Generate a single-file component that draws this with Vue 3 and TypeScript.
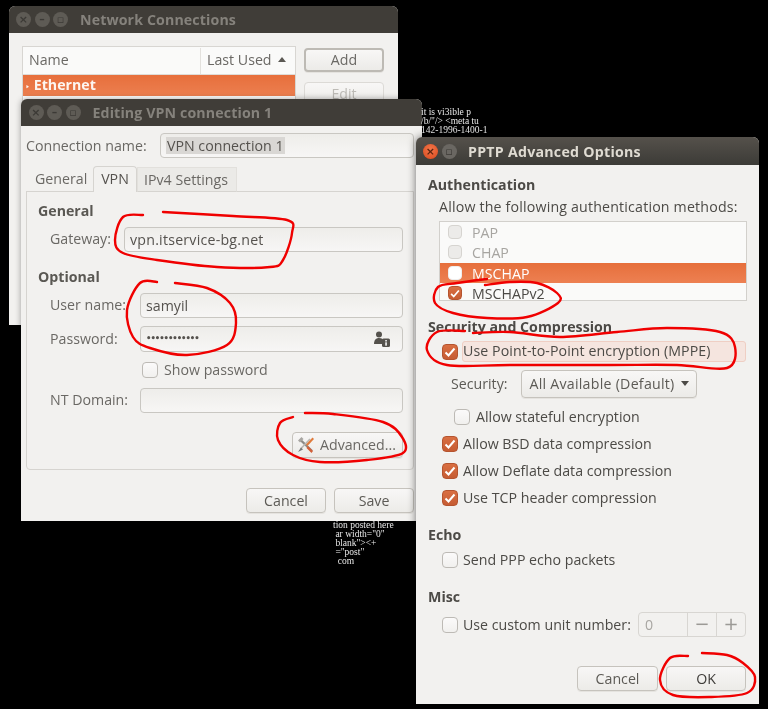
<script setup lang="ts">
type Pt = [number, number];

const scribbles: Pt[][] = [
  [[143,215],[123,217],[115,240],[123,253],[157,260],[217,267],[270,267],[283,260],[292,233],[287,220],[233,216],[163,212]],
  [[157,282],[140,283],[127,310],[133,337],[150,348],[187,355],[227,345],[236,323],[230,303],[207,288],[175,283]],
  [[293,417],[280,423],[278,440],[293,455],[320,462],[367,460],[403,453],[402,437],[383,422],[333,414],[305,413]],
  [[487,279],[457,283],[438,287],[435,303],[453,313],[487,318],[527,317],[558,303],[557,293],[537,283],[510,282],[485,285]],
  [[465,331],[437,332],[427,350],[447,365],[510,365],[610,365],[677,365],[727,368],[735,347],[720,332],[667,328],[617,332],[560,337],[510,332],[473,333]],
  [[688,656],[670,658],[660,680],[673,695],[710,697],[747,693],[755,677],[743,663],[727,655],[702,653]],
];

function smooth(p: Pt[]): string {
  let d = `M${p[0][0]} ${p[0][1]}`;
  for (let i = 0; i < p.length - 1; i++) {
    const a = p[Math.max(i - 1, 0)];
    const b = p[i];
    const c = p[i + 1];
    const e = p[Math.min(i + 2, p.length - 1)];
    const c1x = b[0] + (c[0] - a[0]) / 6;
    const c1y = b[1] + (c[1] - a[1]) / 6;
    const c2x = c[0] - (e[0] - b[0]) / 6;
    const c2y = c[1] - (e[1] - b[1]) / 6;
    d += ` C${c1x} ${c1y} ${c2x} ${c2y} ${c[0]} ${c[1]}`;
  }
  return d;
}

const paths = scribbles.map(smooth);
const methods = [
  { name: 'PAP', cls: 'off', checked: false },
  { name: 'CHAP', cls: 'off', checked: false },
  { name: 'MSCHAP', cls: 'sel', checked: false },
  { name: 'MSCHAPv2', cls: '', checked: true },
];
const compression = ['Allow BSD data compression', 'Allow Deflate data compression', 'Use TCP header compression'];
</script>

<template>
  <div class="stage">
    <!-- Network Connections -->
    <section class="win nc">
      <header class="title dim">
        <span class="wb"><i class="dot">×</i><i class="dot">–</i><i class="dot">▫</i></span>
        <span class="ttext">Network Connections</span>
      </header>
      <div class="nc-body">
        <div class="nc-list">
          <div class="nc-head">
            <span class="nc-name">Name</span>
            <span class="nc-used">Last Used <b class="tri"></b></span>
          </div>
          <div class="nc-row"><span class="mini">‣</span> Ethernet</div>
        </div>
        <div class="nc-btns">
          <button class="btn add">Add</button>
          <button class="btn ghost">Edit</button>
        </div>
      </div>
    </section>

    <!-- Editing VPN -->
    <section class="win ed">
      <header class="title dim">
        <span class="wb"><i class="dot">×</i><i class="dot">–</i><i class="dot">▫</i></span>
        <span class="ttext">Editing VPN connection 1</span>
      </header>
      <div class="ed-body">
        <div class="name-row">
          <label class="name-label">Connection name:</label>
          <div class="entry grow"><span class="hl">VPN connection 1</span></div>
        </div>
        <div class="tabs">
          <span class="tab t1">General</span>
          <span class="tab active">VPN</span>
          <span class="tab t3">IPv4 Settings</span>
        </div>
        <div class="pane">
          <div class="h bold">General</div>
          <div class="frow gw">
            <label class="gw-l">Gateway:</label>
            <div class="entry grow host">vpn.itservice-bg.net</div>
          </div>
          <div class="h bold opt">Optional</div>
          <div class="frow gw">
            <label class="f-l">User name:</label>
            <div class="entry grow">samyil</div>
          </div>
          <div class="frow pw">
            <label class="f-l">Password:</label>
            <div class="entry grow pass">
              <span class="dots">••••••••••••</span>
              <svg class="uicon" width="18" height="18" viewBox="0 0 18 18">
                <circle cx="6" cy="4.5" r="3" fill="#55524d" />
                <path d="M1 14c0-4 2-6 5-6s4 1 4.500 3v3z" fill="#55524d" />
                <rect x="9" y="8.500" width="8" height="8.500" rx="1.500" fill="#55524d" />
                <rect x="12.300" y="10" width="1.500" height="1.500" fill="#fff" />
                <rect x="12.300" y="12.300" width="1.500" height="3.400" fill="#fff" />
              </svg>
            </div>
          </div>
          <div class="show-row">
            <span class="chk"></span>
            <span class="lift">Show password</span>
          </div>
          <div class="frow nt">
            <label class="f-l">NT Domain:</label>
            <div class="entry grow"></div>
          </div>
          <div class="adv-row">
            <button class="btn adv">
              <svg width="18" height="18" viewBox="0 0 18 18">
                <path d="M3 3.500 15 15" stroke="#8c8a86" stroke-width="2.400" />
                <path d="M4.500 1 1 4.500 3 6.500 6.500 3z" fill="#a8a6a2" />
                <path d="M13 3 3.500 13" stroke="#b8b6b2" stroke-width="1.600" />
                <path d="M15.500 1.500 9 8.500 10.500 10 17 3z" fill="#e07b3c" />
                <path d="M1 16l3-4.500 2 2z" fill="#777" />
                <path d="M11 10l5 5-1.500 2-5-5z" fill="#d2603a" />
              </svg>
              <span>Advanced...</span>
            </button>
          </div>
        </div>
        <div class="actions ed-actions">
          <button class="btn w80">Cancel</button>
          <button class="btn w80">Save</button>
        </div>
      </div>
    </section>

    <!-- Garbled scraps on the black desktop -->
    <div class="scrap s1">
      <div>it is vi3ible p</div>
      <div>/b/"/&gt; &lt;meta tu</div>
      <div>142-1996-1400-1</div>
    </div>
    <div class="scrap s2">
      <div>tion posted here</div>
      <div>&nbsp;ar width="0"</div>
      <div>&nbsp;blank"&gt;&lt;+</div>
      <div>&nbsp;="post"</div>
      <div>&nbsp;&nbsp;com</div>
    </div>

    <!-- PPTP -->
    <section class="win pp">
      <header class="title live">
        <span class="wb">
          <i class="dot close">×</i>
          <i class="dot gray">▫</i>
        </span>
        <span class="ttext">PPTP Advanced Options</span>
      </header>
      <div class="pp-body">
        <div class="ph bold a1">Authentication</div>
        <div class="allow">Allow the following authentication methods:</div>
        <ul class="mlist">
          <li v-for="m in methods" :key="m.name" :class="m.cls">
            <span class="chk small" :class="{ on: m.checked }">
              <svg v-if="m.checked" viewBox="0 0 14 14" width="13" height="13"><path d="M2.500 7.500 5.500 10.500 11.500 3.500" fill="none" stroke="#fff" stroke-width="2" /></svg>
            </span>
            <span>{{ m.name }}</span>
          </li>
        </ul>
        <div class="ph bold a2">Security and Compression</div>
        <div class="mppe">
          <span class="chk on">
            <svg viewBox="0 0 14 14" width="14" height="14"><path d="M2.500 7.500 5.500 10.500 11.500 3.500" fill="none" stroke="#fff" stroke-width="2" /></svg>
          </span>
          <span class="mppe-t">Use Point-to-Point encryption (MPPE)</span>
        </div>
        <div class="sec">
          <label class="sec-l">Security:</label>
          <button class="btn combo">All Available (Default) <b class="tri down"></b></button>
        </div>
        <div class="ck sub"><span class="chk"></span><span class="lift">Allow stateful encryption</span></div>
        <div v-for="c in compression" :key="c" class="ck cmp">
          <span class="chk on">
            <svg viewBox="0 0 14 14" width="14" height="14"><path d="M2.500 7.500 5.500 10.500 11.500 3.500" fill="none" stroke="#fff" stroke-width="2" /></svg>
          </span>
          <span class="lift">{{ c }}</span>
        </div>
        <div class="ph bold a3">Echo</div>
        <div class="ck a4"><span class="chk"></span><span class="lift">Send PPP echo packets</span></div>
        <div class="ph bold a3">Misc</div>
        <div class="custom">
          <span class="chk"></span>
          <span class="custom-t">Use custom unit number:</span>
          <div class="spin">
            <span class="sp-v">0</span>
            <span class="sp-b">−</span>
            <span class="sp-b">+</span>
          </div>
        </div>
        <div class="actions pp-actions">
          <button class="btn w81">Cancel</button>
          <button class="btn w80 okb">OK</button>
        </div>
      </div>
    </section>

    <!-- Red hand-drawn marks -->
    <svg class="marks" width="768" height="709" viewBox="0 0 768 709">
      <path v-for="(d, i) in paths" :key="i" :d="d" fill="none" stroke="#f00000" stroke-width="2.400" stroke-linecap="round" stroke-linejoin="round" />
    </svg>
  </div>
</template>

<style>
html, body { margin: 0; background: #000; }
</style>

<style scoped>
.stage {
  position: relative;
  width: 768px;
  height: 709px;
  overflow: hidden;
  background: #000;
  font-family: "Open Sans", "Noto Sans", sans-serif;
  font-size: 14.2px;
  color: #4c4a46;
  filter: blur(0.45px);
}
.win {
  position: absolute;
  background: #f2f1ef;
  border-radius: 6px 6px 0 0;
  box-sizing: border-box;
}
.nc { left: 9px; top: 6px; width: 389px; height: 319px; }
.ed { left: 21px; top: 99px; width: 401px; height: 422px; box-shadow: 0 0 6px rgba(0,0,0,.35); }
.pp { left: 416px; top: 137px; width: 343px; height: 567px; box-shadow: 0 0 9px rgba(0,0,0,.55); }

.title {
  display: flex;
  align-items: center;
  height: 27px;
  border-radius: 6px 6px 0 0;
  font-weight: 700;
  letter-spacing: .12px;
}
.title.dim { background: #403d38; color: #85827c; }
.title.live { height: 28px; background: linear-gradient(#55514b, #3c3b37); color: #dfdbd2; letter-spacing: .25px; }
.wb { display: flex; align-items: center; gap: 3.500px; margin-left: 7px; width: 64px; }
.ed .wb { margin-left: 7.500px; }
.dot {
  display: flex; align-items: center; justify-content: center;
  width: 15px; height: 15px; border-radius: 50%;
  background: #5e5b55; color: #3c3a36;
  font: 700 11px/1 "DejaVu Sans", sans-serif;
}
.pp .wb { margin-left: 7px; width: 45px; }
.dot.close { background: radial-gradient(circle at 50% 35%, #f2764a, #d9481c); color: #5b2410; }
.dot.gray { background: #6a6762; color: #3c3a36; }

button.btn {
  display: flex; align-items: center; justify-content: center;
  box-sizing: border-box;
  padding: 0 0 1px;
  font: inherit;
  color: #5c5a55;
  background: linear-gradient(#f8f7f6, #ecebe8);
  border: 1px solid #c6c3bd;
  border-radius: 4px;
  box-shadow: 0 1px 0 #e5e3df;
}
.entry {
  box-sizing: border-box;
  display: flex; align-items: center;
  height: 25px;
  padding: 0 5px 1px;
  border: 1px solid #c9c7c2;
  border-radius: 4px;
  background: linear-gradient(#eeedea, #f7f6f5);
  color: #55524e;
}
.grow { flex: 1; min-width: 0; }
.bold { font-weight: 700; color: #5a5853; }
.lift { margin-top: -2px; }

/* network connections */
.nc-body { display: flex; gap: 8px; padding: 13px 0 0 13px; }
.nc-list { width: 274px; background: #fff; border: 1px solid #d8d6d2; box-sizing: border-box; height: 60px; color: #6a6864; }
.nc-head { display: flex; height: 27px; align-items: center; background: #fafaf9; border-bottom: 1px solid #dedcd8; }
.nc-name { width: 178px; padding-left: 6px; box-sizing: border-box; border-right: 1px solid #e3e1dd; line-height: 24px; height: 26px; }
.nc-used { padding: 0 0 2px 6px; display: flex; align-items: center; gap: 6px; }
.tri { display: inline-block; width: 0; height: 0; border: 4.500px solid transparent; border-top: 0; border-bottom: 5px solid #5b5954; }
.tri.down { border-bottom: 0; border-top: 5px solid #4c4a46; margin-left: 6px; }
.nc-row {
  height: 21px; line-height: 19px; background: linear-gradient(#e76f3c, #ec7f50);
  color: #fdf6f1; font-weight: 700; padding-left: 3px;
}
.mini { font-size: 8px; margin-right: 1px; }
.nc-btns { display: flex; flex-direction: column; gap: 10px; padding-top: 2px; }
.nc-btns .btn { width: 80px; height: 24px; }
.btn.add { border: 2px solid #bdbab4; color: #6a6864; }
.btn.ghost { color: #bdbbb6; border-color: #dcdad6; }

/* editing */
.ed-body { padding: 7px 8px 0 5px; }
.name-row { display: flex; align-items: center; }
.name-label { width: 134px; color: #6a6864; margin-top: -1px; }
.hl { background: #d9d7d4; padding: 0 1px; line-height: 17px; }
.tabs { display: flex; margin-top: 8px; height: 26px; align-items: flex-end; position: relative; z-index: 1; margin-bottom: -1px; }
.tab { color: #6a6864; height: 25px; line-height: 24px; box-sizing: border-box; }
.t1 { width: 67px; padding-left: 9px; border-bottom: 1px solid #d6d4d0; }
.t3 { padding: 0 8px 0 6px; background: #ebeae7; border: 1px solid #e2e0dc; border-bottom: 1px solid #d6d4d0; }
.active {
  width: 44px; text-align: center; background: #f2f1ef; height: 26px;
  border: 1px solid #d6d4d0; border-bottom: 0; border-radius: 4px 4px 0 0; line-height: 24px; color: #55524e;
}
.pane {
  box-sizing: border-box; height: 279px; padding: 10px 10px 0 11px;
  border: 1px solid #d6d4d0; border-radius: 0 0 4px 4px;
}
.h { height: 20px; line-height: 18px; }
.h.opt { margin-top: 16px; }
.frow { display: flex; align-items: center; padding-left: 12px; color: #6a6864; }
.frow.gw { margin-top: 5px; }
.frow.pw { margin-top: 8px; }
.frow.pw .entry { height: 26px; }
.frow.nt { margin-top: 10px; }
.gw-l { width: 74px; margin-top: -2px; }
.f-l { width: 90px; margin-top: -2px; }
.host { padding-left: 5px; letter-spacing: .22px; }
.pass { justify-content: space-between; padding-right: 11px; padding-left: 5px; }
.dots { font: 700 8.500px/1 "DejaVu Sans", sans-serif; letter-spacing: -1.050px; color: #55524e; }
.uicon { flex: none; }
.show-row { display: flex; align-items: center; gap: 6px; margin: 10px 0 0 104px; height: 16px; color: #6a6864; }
.adv-row { display: flex; justify-content: flex-end; margin-top: 19px; }
button.btn.adv { width: 111px; height: 26px; justify-content: flex-start; gap: 5px; padding: 0 0 1px 4px; color: #6a6864; }
.adv svg { flex: none; }
.actions { display: flex; justify-content: flex-end; gap: 8px; }
.ed-actions { margin-top: 18px; }
.actions .btn { height: 25px; }
.w80 { width: 80px; }
.w81 { width: 81px; }

/* checks */
.chk {
  display: inline-flex; align-items: center; justify-content: center;
  flex: none; box-sizing: border-box;
  width: 16px; height: 16px;
  border: 1px solid #bdbab5; border-radius: 4px;
  background: linear-gradient(#fbfafa, #f1f0ee);
}
.chk.on { background: linear-gradient(#d96f42, #c65c33); border-color: #b5542f; }
.chk.small { width: 14px; height: 14px; }

/* pptp */
.pp-body { padding: 10px 13px 0 12px; color: #4c4a46; }
.ph { height: 20px; line-height: 20px; color: #4c4a46; }
.allow { height: 20px; line-height: 20px; margin: 2px 0 0 11px; white-space: nowrap; letter-spacing: .18px; }
.mlist { list-style: none; margin: 4px 0 0 11px; padding: 0; box-sizing: border-box; height: 80px; width: 308px; background: #fafaf9; border: 1px solid #d2d0cc; overflow: hidden; }
.mlist li { display: flex; align-items: center; gap: 10px; height: 20px; padding-left: 8px; }
.mlist li.off { color: #a7a5a1; }
.mlist li.off .chk { background: #ecebe9; border-color: #d6d4d0; }
.mlist li.sel { background: linear-gradient(#e66f3c, #ed8052); color: #fff; margin-top: 1px; }
.mlist li.sel .chk { background: #fff; border-color: #eee; }
.a2 { margin-top: 16px; }
.mppe { display: flex; align-items: center; gap: 4px; margin: 4px 0 0 14px; height: 21px; }
.mppe-t {
  flex: 1; height: 21px; line-height: 18px; box-sizing: border-box; padding-left: 0;
  background: #f5e5df; border: 1px solid #efcfc4; border-radius: 3px; white-space: nowrap;
  letter-spacing: .08px;
}
.sec { display: flex; align-items: center; margin: 8px 0 0 23px; }
.sec-l { width: 70px; color: #5c5a55; margin-top: -1px; }
button.btn.combo { width: 176px; height: 28px; white-space: nowrap; color: #5c5a55; letter-spacing: .25px; }
.ck { display: flex; align-items: center; gap: 5px; height: 20px; margin: 7px 0 0 14px; white-space: nowrap; }
.ck.sub { margin: 9px 0 0 26px; gap: 6px; }
.a3 { margin-top: 17px; }
.ck.a4 { margin-top: 5px; }
.custom { display: flex; align-items: center; margin: 5px 0 0 14px; height: 25px; white-space: nowrap; }
.custom-t { margin-left: 5px; width: 175px; }
.spin { display: flex; width: 108px; height: 25px; box-sizing: border-box; border: 1px solid #d8d6d2; border-radius: 4px; color: #a8a6a2; }
.sp-v { flex: 1; padding-left: 6px; line-height: 23px; }
.sp-b { width: 28px; text-align: center; border-left: 1px solid #d8d6d2; font: 400 18px/21px "DejaVu Sans", sans-serif; color: #9c9a96; }
.pp-actions { margin-top: 29px; }
button.btn.okb { color: #3f3d3a; }

/* scraps */
.scrap {
  position: absolute;
  color: #e8e8e8;
  font: 400 9.500px/9px "Liberation Serif", serif;
  white-space: nowrap;
}
.s1 { left: 421px; top: 108px; }
.s2 { left: 333px; top: 521px; }
.marks { position: absolute; left: 0; top: 0; pointer-events: none; }
</style>
